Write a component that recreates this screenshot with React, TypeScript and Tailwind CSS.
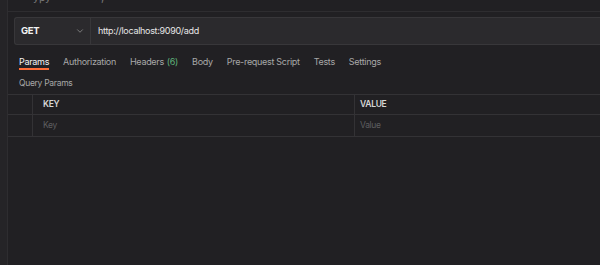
import React from 'react';
import { ChevronDown } from 'lucide-react';

const tabs = [
  { label: 'Params', active: true },
  { label: 'Authorization' },
  { label: 'Headers', count: '(6)' },
  { label: 'Body' },
  { label: 'Pre-request Script' },
  { label: 'Tests' },
  { label: 'Settings' },
];

export default function App() {
  return (
    <div
      className="flex h-[265px] w-[600px] overflow-hidden bg-[#212023] text-[9px] tracking-[-0.3px] text-[#a8a8a8]"
      style={{ fontFamily: 'Inter, "Noto Sans", sans-serif' }}
    >
      {/* left rail */}
      <div className="w-[8px] shrink-0 border-r border-[#2e2d30] bg-[#252427]" />

      <div className="flex min-w-0 flex-1 flex-col">
        {/* clipped breadcrumb row */}
        <div className="h-[12px] shrink-0 overflow-hidden border-b border-[#2e2d30]">
          <div className="-mt-[10px] flex gap-[50px] pl-[25px] text-[11px] leading-[14px] text-[#7a7a7a]">
            <span>ypy</span>
            <span>,</span>
          </div>
        </div>

        {/* request bar */}
        <div className="mt-[5px] ml-[6px] flex h-[28px] shrink-0 rounded-l-[3px] border border-r-0 border-[#38373a] bg-[#2b2a2d]">
          <div className="flex w-[76px] items-center justify-between border-r border-[#38373a] pl-[6px] pr-[5px]">
            <span className="text-[9.5px] font-bold text-[#f2f2f2]">GET</span>
            <ChevronDown className="h-[10px] w-[10px] text-[#8a8a8a]" strokeWidth={2} />
          </div>
          <div className="flex items-center pl-[7px] text-[#e6e6e6]">http://localhost:9090/add</div>
        </div>

        {/* tabs */}
        <div className="mt-[6px] flex h-[21px] shrink-0 items-stretch gap-[14px] pl-[11px]">
          {tabs.map(t => (
            <div key={t.label} className="relative flex items-center">
              <span className={t.active ? 'text-[#f2f2f2]' : 'text-[#a8a8a8]'}>
                {t.label}
                {t.count && <span className="ml-[3px] text-[#5fb37a]">{t.count}</span>}
              </span>
              {t.active && <div className="absolute bottom-[2px] left-0 right-0 h-[2px] bg-[#ff6c37]" />}
            </div>
          ))}
        </div>

        <div className="flex h-[22px] shrink-0 items-center pl-[11px] text-[8.5px] text-[#a8a8a8]">
          Query Params
        </div>

        {/* table */}
        <div className="border-t border-[#333235] text-[8.5px]">
          <div className="flex h-[20px] border-b border-[#333235]">
            <div className="w-[25px] shrink-0 border-r border-[#333235]" />
            <div className="flex w-[322px] shrink-0 items-center border-r border-[#333235] pl-[10px] font-semibold text-[#d6d6d6]">KEY</div>
            <div className="flex items-center pl-[5px] font-semibold text-[#d6d6d6]">VALUE</div>
          </div>
          <div className="flex h-[22px] border-b border-[#333235]">
            <div className="w-[25px] shrink-0 border-r border-[#333235]" />
            <div className="flex w-[322px] shrink-0 items-center border-r border-[#333235] pl-[10px] text-[#5e5e60]">Key</div>
            <div className="flex items-center pl-[5px] text-[#5e5e60]">Value</div>
          </div>
        </div>
      </div>
    </div>
  );
}
